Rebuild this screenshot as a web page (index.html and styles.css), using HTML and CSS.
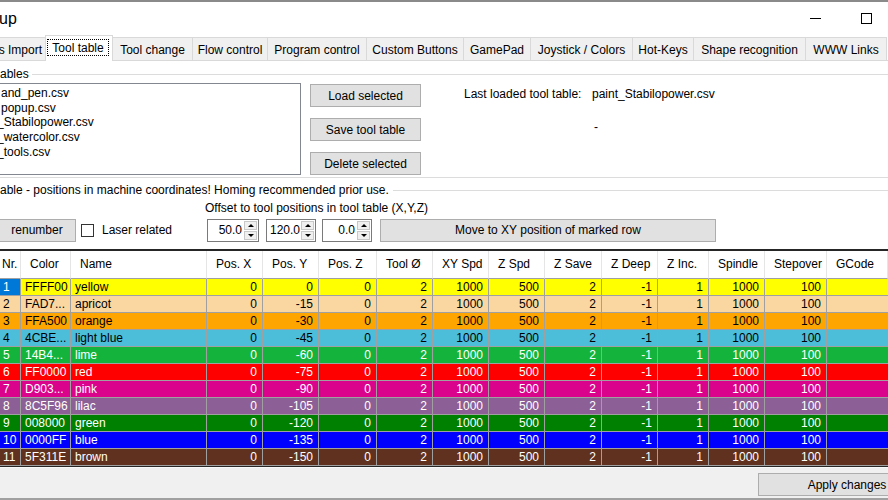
FILE: index.html
```html
<!DOCTYPE html>
<html>
<head>
<meta charset="utf-8">
<link rel="stylesheet" href="styles.css">
</head>
<body>
<div class="window">
  <div class="titlebar">
    <span class="title">up</span>
    <div class="wctrls">
      <div class="wbtn"><span class="wmin"></span></div>
      <div class="wbtn"><span class="wmax"></span></div>
    </div>
  </div>

  <div class="tabstrip">
    <div class="tab t-import">s Import</div>
    <div class="tab active t-tool"><span class="focus">Tool table</span></div>
    <div class="tab t-change">Tool change</div>
    <div class="tab t-flow">Flow control</div>
    <div class="tab t-prog">Program control</div>
    <div class="tab t-custom">Custom Buttons</div>
    <div class="tab t-pad">GamePad</div>
    <div class="tab t-joy">Joystick / Colors</div>
    <div class="tab t-hot">Hot-Keys</div>
    <div class="tab t-shape">Shape recognition</div>
    <div class="tab t-www">WWW Links</div>
  </div>

  <div class="page">
    <div class="legend-row"><span class="legend">ables</span><span class="rule"></span></div>
    <div class="group1">
      <div class="listbox">
        <div class="item">and_pen.csv</div>
        <div class="item">popup.csv</div>
        <div class="item clip">_Stabilopower.csv</div>
        <div class="item clip">_watercolor.csv</div>
        <div class="item clip">_tools.csv</div>
      </div>
      <div class="btncol">
        <div class="btn w110">Load selected</div>
        <div class="btn w110">Save tool table</div>
        <div class="btn w110">Delete selected</div>
      </div>
      <div class="info">
        <div class="info-row"><span class="info-label">Last loaded tool table:</span><span>paint_Stabilopower.csv</span></div>
        <div class="info-row second"><span class="info-label"></span><span>-</span></div>
      </div>
    </div>
    <div class="group-end"></div>

    <div class="legend-row second-legend"><span class="legend">able - positions in machine coordinates! Homing recommended prior use.</span><span class="rule"></span></div>
    <div class="offset-label">Offset to tool positions in tool table (X,Y,Z)</div>
    <div class="controls">
      <div class="btn renumber">renumber</div>
      <div class="check"><span class="box"></span><span>Laser related</span></div>
      <div class="spin s1"><span class="val">50.0</span><span class="arrows"><span class="up"></span><span class="dn"></span></span></div>
      <div class="spin s2"><span class="val left">120.0</span><span class="arrows"><span class="up"></span><span class="dn"></span></span></div>
      <div class="spin s3"><span class="val">0.0</span><span class="arrows"><span class="up"></span><span class="dn"></span></span></div>
      <div class="btn move">Move to XY position of marked row</div>
    </div>

    <div class="grid">
      <div class="row head">
        <div class="c nr">Nr.</div><div class="c">Color</div><div class="c">Name</div><div class="c">Pos. X</div><div class="c">Pos. Y</div><div class="c">Pos. Z</div><div class="c">Tool Ø</div><div class="c">XY Spd</div><div class="c">Z Spd</div><div class="c">Z Save</div><div class="c">Z Deep</div><div class="c">Z Inc.</div><div class="c">Spindle</div><div class="c">Stepover</div><div class="c last">GCode</div>
      </div>
      <div class="row r1">
        <div class="c nr sel">1</div><div class="c">FFFF00</div><div class="c">yellow</div><div class="c n">0</div><div class="c n">0</div><div class="c n">0</div><div class="c n">2</div><div class="c n">1000</div><div class="c n">500</div><div class="c n">2</div><div class="c n">-1</div><div class="c n">1</div><div class="c n">1000</div><div class="c n">100</div><div class="c last"></div>
      </div>
      <div class="row r2">
        <div class="c nr">2</div><div class="c">FAD7...</div><div class="c">apricot</div><div class="c n">0</div><div class="c n">-15</div><div class="c n">0</div><div class="c n">2</div><div class="c n">1000</div><div class="c n">500</div><div class="c n">2</div><div class="c n">-1</div><div class="c n">1</div><div class="c n">1000</div><div class="c n">100</div><div class="c last"></div>
      </div>
      <div class="row r3">
        <div class="c nr">3</div><div class="c">FFA500</div><div class="c">orange</div><div class="c n">0</div><div class="c n">-30</div><div class="c n">0</div><div class="c n">2</div><div class="c n">1000</div><div class="c n">500</div><div class="c n">2</div><div class="c n">-1</div><div class="c n">1</div><div class="c n">1000</div><div class="c n">100</div><div class="c last"></div>
      </div>
      <div class="row r4">
        <div class="c nr">4</div><div class="c">4CBE...</div><div class="c">light blue</div><div class="c n">0</div><div class="c n">-45</div><div class="c n">0</div><div class="c n">2</div><div class="c n">1000</div><div class="c n">500</div><div class="c n">2</div><div class="c n">-1</div><div class="c n">1</div><div class="c n">1000</div><div class="c n">100</div><div class="c last"></div>
      </div>
      <div class="row r5">
        <div class="c nr">5</div><div class="c">14B4...</div><div class="c">lime</div><div class="c n">0</div><div class="c n">-60</div><div class="c n">0</div><div class="c n">2</div><div class="c n">1000</div><div class="c n">500</div><div class="c n">2</div><div class="c n">-1</div><div class="c n">1</div><div class="c n">1000</div><div class="c n">100</div><div class="c last"></div>
      </div>
      <div class="row r6">
        <div class="c nr">6</div><div class="c">FF0000</div><div class="c">red</div><div class="c n">0</div><div class="c n">-75</div><div class="c n">0</div><div class="c n">2</div><div class="c n">1000</div><div class="c n">500</div><div class="c n">2</div><div class="c n">-1</div><div class="c n">1</div><div class="c n">1000</div><div class="c n">100</div><div class="c last"></div>
      </div>
      <div class="row r7">
        <div class="c nr">7</div><div class="c">D903...</div><div class="c">pink</div><div class="c n">0</div><div class="c n">-90</div><div class="c n">0</div><div class="c n">2</div><div class="c n">1000</div><div class="c n">500</div><div class="c n">2</div><div class="c n">-1</div><div class="c n">1</div><div class="c n">1000</div><div class="c n">100</div><div class="c last"></div>
      </div>
      <div class="row r8">
        <div class="c nr">8</div><div class="c">8C5F96</div><div class="c">lilac</div><div class="c n">0</div><div class="c n">-105</div><div class="c n">0</div><div class="c n">2</div><div class="c n">1000</div><div class="c n">500</div><div class="c n">2</div><div class="c n">-1</div><div class="c n">1</div><div class="c n">1000</div><div class="c n">100</div><div class="c last"></div>
      </div>
      <div class="row r9">
        <div class="c nr">9</div><div class="c">008000</div><div class="c">green</div><div class="c n">0</div><div class="c n">-120</div><div class="c n">0</div><div class="c n">2</div><div class="c n">1000</div><div class="c n">500</div><div class="c n">2</div><div class="c n">-1</div><div class="c n">1</div><div class="c n">1000</div><div class="c n">100</div><div class="c last"></div>
      </div>
      <div class="row r10">
        <div class="c nr">10</div><div class="c">0000FF</div><div class="c">blue</div><div class="c n">0</div><div class="c n">-135</div><div class="c n">0</div><div class="c n">2</div><div class="c n">1000</div><div class="c n">500</div><div class="c n">2</div><div class="c n">-1</div><div class="c n">1</div><div class="c n">1000</div><div class="c n">100</div><div class="c last"></div>
      </div>
      <div class="row r11">
        <div class="c nr">11</div><div class="c">5F311E</div><div class="c">brown</div><div class="c n">0</div><div class="c n">-150</div><div class="c n">0</div><div class="c n">2</div><div class="c n">1000</div><div class="c n">500</div><div class="c n">2</div><div class="c n">-1</div><div class="c n">1</div><div class="c n">1000</div><div class="c n">100</div><div class="c last"></div>
      </div>
    </div>
  </div>

  <div class="footer">
    <div class="btn apply">Apply changes</div>
  </div>
</div>
</body>
</html>
```

FILE: styles.css
```css
* { box-sizing: border-box; }
html, body { margin: 0; padding: 0; }
body {
  width: 888px;
  height: 500px;
  overflow: hidden;
  background: #f0f0f0;
  font-family: "Liberation Sans", Arial, sans-serif;
  font-size: 12px;
  color: #000;
}
.window { width: 888px; height: 500px; overflow: hidden; background: #fff; }

/* title bar */
.titlebar {
  height: 35px;
  border-top: 2px solid #8a8a8a;
  display: flex;
  align-items: center;
  background: #fff;
}
.title { font-size: 16px; margin-left: -1px; }
.wctrls { margin-left: auto; display: flex; width: 101px; height: 33px; }
.wbtn { width: 51px; height: 33px; display: flex; align-items: center; }
.wbtn:last-child { width: 50px; }
.wmin { display: block; margin-left: 23px; width: 11px; height: 1px; background: #000; }
.wmax { display: block; margin-left: 23px; width: 11px; height: 11px; border: 1px solid #000; }

/* tabs */
.tabstrip {
  height: 26px;
  display: flex;
  align-items: flex-end;
  border-bottom: 1px solid #d9d9d9;
  background: #fff;
}
.tab {
  height: 23px;
  background: #f0f0f0;
  border: 1px solid #d9d9d9;
  border-bottom: none;
  border-left: none;
  display: flex;
  align-items: center;
  justify-content: center;
  white-space: nowrap;
  flex: none;
  padding-top: 1px;
}
.t-import { width: 45px; justify-content: flex-end; padding-right: 3px; border-right: none; }
.tab.active {
  height: 26px;
  background: #fff;
  margin-bottom: -1px;
  border-left: 1px solid #d9d9d9;
  padding: 3px 3px 5px 1px;
}
.t-tool { width: 68px; }
.focus {
  flex: 1;
  align-self: stretch;
  border: 1px dotted #000;
  display: flex;
  align-items: center;
  justify-content: center;
}
.t-change { width: 80px; }
.t-flow { width: 75px; }
.t-prog { width: 99px; }
.t-custom { width: 97px; }
.t-pad { width: 67px; }
.t-joy { width: 102px; }
.t-hot { width: 61px; }
.t-shape { width: 112px; }
.t-www { width: 81px; }

/* page */
.page { background: #fff; padding-top: 7px; height: 406px; }
.legend-row { display: flex; align-items: center; height: 12px; line-height: 12px; }
.legend { white-space: nowrap; }
.rule { flex: 1; height: 1px; background: #dcdcdc; margin-left: 3px; }

.group1 { display: flex; margin-top: 3px; height: 92px; }
.listbox {
  width: 303px;
  margin-left: -2px;
  height: 92px;
  border: 1px solid #828790;
  padding-top: 2px;
  padding-left: 2px;
  background: #fff;
}
.item { height: 14.7px; line-height: 14.7px; white-space: nowrap; }
.item.clip { margin-left: -4px; }

.btncol { margin-left: 9px; padding-top: 1px; display: flex; flex-direction: column; gap: 11px; }
.btn {
  background: #e1e1e1;
  border: 1px solid #adadad;
  height: 23px;
  display: flex;
  align-items: center;
  justify-content: center;
  white-space: nowrap;
  flex: none;
}
.w110 { width: 111px; }

.info { margin-left: 43px; padding-top: 4px; }
.info-row { display: flex; height: 14px; line-height: 14px; }
.info-row.second { margin-top: 19px; padding-left: 2px; }
.info-label { width: 128px; }

.group-end { height: 1px; background: #dcdcdc; margin-top: 2px; }
.second-legend { margin-top: 6px; }
.second-legend .rule { margin-left: 4px; }

.offset-label { margin-top: 5px; padding-left: 205px; height: 14px; line-height: 14px; }

.controls { display: flex; align-items: center; margin-top: 3px; height: 24px; }
.renumber { width: 78px; margin-left: -2px; }
.check { display: flex; align-items: center; margin-left: 5px; width: 124px; }
.box { width: 13px; height: 13px; border: 1px solid #333; background: #fff; margin-right: 8px; }
.spin {
  height: 23px;
  border: 1px solid #7a7a7a;
  display: flex;
  align-items: stretch;
  background: #fff;
  overflow: hidden;
}
.s1 { width: 52px; margin-left: 2px; }
.s2 { width: 50px; margin-left: 7px; }
.s3 { width: 50px; margin-left: 6px; }
.val {
  flex: 1;
  text-align: right;
  line-height: 21px;
  padding-right: 2px;
  overflow: hidden;
  white-space: nowrap;
}
.val.left { text-align: left; padding-left: 3px; padding-right: 0; }
.arrows {
  width: 14px;
  display: flex;
  flex-direction: column;
  padding: 1px 1px 1px 0;
  gap: 1px;
  flex: none;
}
.arrows span {
  flex: 1;
  background: #f0f0f0;
  border: 1px solid #c8c8c8;
  display: flex;
  align-items: center;
  justify-content: center;
}
.arrows .up::before {
  content: "";
  border-left: 3px solid transparent;
  border-right: 3px solid transparent;
  border-bottom: 3px solid #000;
}
.arrows .dn::before {
  content: "";
  border-left: 3px solid transparent;
  border-right: 3px solid transparent;
  border-top: 3px solid #000;
}
.move { width: 336px; margin-left: 8px; }

/* grid */
.grid {
  margin-top: 7px;
  border-top: 2px solid #262626;
  border-bottom: 2px solid #262626;
}
.row {
  display: grid;
  grid-template-columns: 21px 50px 136px 56px 56px 58px 56px 56px 56px 57px 56px 51px 56px 62px 61px;
  height: 17px;
}
.c {
  border-right: 1px solid #a0a0a0;
  border-bottom: 1px solid #a0a0a0;
  padding: 0 5px 0 4px;
  line-height: 16px;
  white-space: nowrap;
  overflow: hidden;
}
.c.n { text-align: right; }
.c.nr { padding-left: 3px; padding-right: 0; }
.c.last { border-right: none; }
.row.head { height: 28px; background: #fff; }
.head .c {
  line-height: 27px;
  padding-left: 9px;
  border-right: 1px solid #e5e5e5;
  border-bottom: 1px solid #a0a0a0;
}
.head .c.nr { padding-left: 2px; }
.c.sel { background: #0078d7; color: #fff; }

.r1 { background: #ffff00; }
.r2 { background: #fad7a0; }
.r3 { background: #ffa500; }
.r4 { background: #4cbed9; }
.r5 { background: #14b43c; color: #fff; }
.r6 { background: #ff0000; color: #fff; }
.r7 { background: #d9038c; color: #fff; }
.r8 { background: #8c5f96; color: #fff; }
.r9 { background: #008000; color: #fff; }
.r10 { background: #0000ff; color: #fff; }
.r11 { background: #5f311e; color: #fff; }

/* footer */
.footer {
  background: #f0f0f0;
  height: 33px;
  padding-top: 5px;
  padding-left: 758px;
  border-bottom: 2px solid #a0a0a0;
  border-top: 1px solid #fafafa;
}
.apply { width: 178px; }
```
